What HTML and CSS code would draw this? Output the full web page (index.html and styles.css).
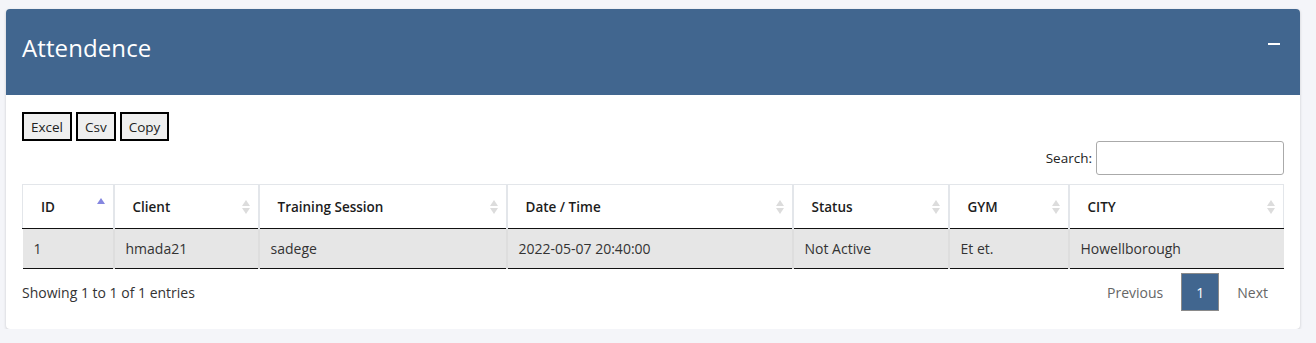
FILE: index.html
```html
<!DOCTYPE html>
<html>
<head>
<meta charset="utf-8">
<link rel="stylesheet" href="styles.css">
</head>
<body>
<div class="card">
  <div class="card-header">
    <h2 class="title">Attendence</h2>
    <span class="collapse"></span>
  </div>
  <div class="card-body">
    <div class="buttons">
      <button class="btn">Excel</button>
      <button class="btn">Csv</button>
      <button class="btn">Copy</button>
    </div>
    <div class="search-row">
      <label class="search-label">Search:</label>
      <input class="search-input" type="text">
    </div>
    <table class="table">
      <colgroup>
        <col style="width:91px"><col style="width:145px"><col style="width:248px"><col style="width:286px"><col style="width:156px"><col style="width:120px"><col style="width:215px">
      </colgroup>
      <thead>
        <tr>
          <th class="sorted">ID</th>
          <th>Client</th>
          <th>Training Session</th>
          <th>Date / Time</th>
          <th>Status</th>
          <th>GYM</th>
          <th>CITY</th>
        </tr>
      </thead>
      <tbody>
        <tr>
          <td>1</td>
          <td>hmada21</td>
          <td>sadege</td>
          <td>2022-05-07 20:40:00</td>
          <td>Not Active</td>
          <td>Et et.</td>
          <td>Howellborough</td>
        </tr>
      </tbody>
    </table>
    <div class="footer">
      <div class="info">Showing 1 to 1 of 1 entries</div>
      <div class="pagination">
        <span class="page-link">Previous</span>
        <span class="page-link current">1</span>
        <span class="page-link">Next</span>
      </div>
    </div>
  </div>
</div>
</body>
</html>
```

FILE: styles.css
```css
* { box-sizing: border-box; }
html, body { margin: 0; padding: 0; }
body {
  background: #f4f5f9;
  padding: 9px 16px 0 6px;
  font-family: "Open Sans", "Noto Sans", sans-serif;
  color: #333;
}
.card {
  background: #fff;
  border-radius: 4px;
  box-shadow: 0 1px 3px rgba(0,0,0,0.18);
  overflow: hidden;
  height: 320px;
}
.card-header {
  background: #41668f;
  height: 86px;
  display: flex;
  align-items: center;
  justify-content: space-between;
  padding: 0 20px 10px 16px;
  color: #fff;
}
.title {
  margin: 0;
  font-weight: 400;
  font-size: 24px;
  letter-spacing: 0.1px;
}
.collapse {
  display: block;
  width: 12px;
  height: 2.5px;
  background: #fff;
  margin-top: -6px;
}
.card-body {
  padding: 17px 16px 0 16px;
}
.buttons {
  display: flex;
  gap: 4px;
}
.btn {
  font-family: inherit;
  font-size: 13.5px;
  background: #efefef;
  border: 2px solid #000;
  color: #222;
  height: 29px;
  padding: 0 7px;
  margin: 0;
}
.search-row {
  display: flex;
  justify-content: flex-end;
  align-items: center;
  gap: 4px;
}
.search-label {
  font-size: 13.5px;
  color: #222;
}
.search-input {
  width: 188px;
  height: 34px;
  border: 1px solid #aaa;
  border-radius: 3px;
}
.table {
  margin-top: 9px;
  width: 100%;
  border-collapse: collapse;
  table-layout: fixed;
  font-size: 14px;
}
.table th {
  text-align: left;
  font-weight: 600;
  font-size: 13.5px;
  color: #1c1c1c;
  height: 44px;
  padding: 0 18px;
  border-top: 1px solid #e3e6ea;
  border-left: 2px solid #e3e6ea;
  border-bottom: 1px solid #111;
  position: relative;
}
.table th:first-child { border-left: 1px solid #e3e6ea; }
.table th:last-child { border-right: 1px solid #e3e6ea; }
.table th::before,
.table th::after {
  content: "";
  position: absolute;
  right: 8px;
  width: 0;
  height: 0;
  border-left: 4px solid transparent;
  border-right: 4px solid transparent;
}
.table th::before {
  top: 15px;
  border-bottom: 6px solid #dcdcdc;
}
.table th::after {
  top: 23px;
  border-top: 6px solid #dcdcdc;
}
.table th.sorted::before {
  top: 13px;
  border-bottom-color: #8587e0;
}
.table th.sorted::after { display: none; }
.table td {
  background: #e6e6e6;
  height: 40px;
  padding: 0 11px;
  color: #333;
  border-left: 2px solid #dedede;
  border-bottom: 1px solid #111;
}
.table td:first-child { border-left: none; }
.footer {
  display: flex;
  justify-content: space-between;
  align-items: center;
  margin-top: 4px;
}
.info {
  font-size: 14px;
  color: #333;
}
.pagination {
  display: flex;
  align-items: center;
}
.page-link {
  font-size: 14px;
  color: #666;
  padding: 0 16px;
  height: 38px;
  display: flex;
  align-items: center;
}
.page-link.current {
  background: #41668f;
  color: #fff;
  border: 1px solid #8a8a8a;
  padding: 0 14px;
  margin: 0 2px;
}
```
